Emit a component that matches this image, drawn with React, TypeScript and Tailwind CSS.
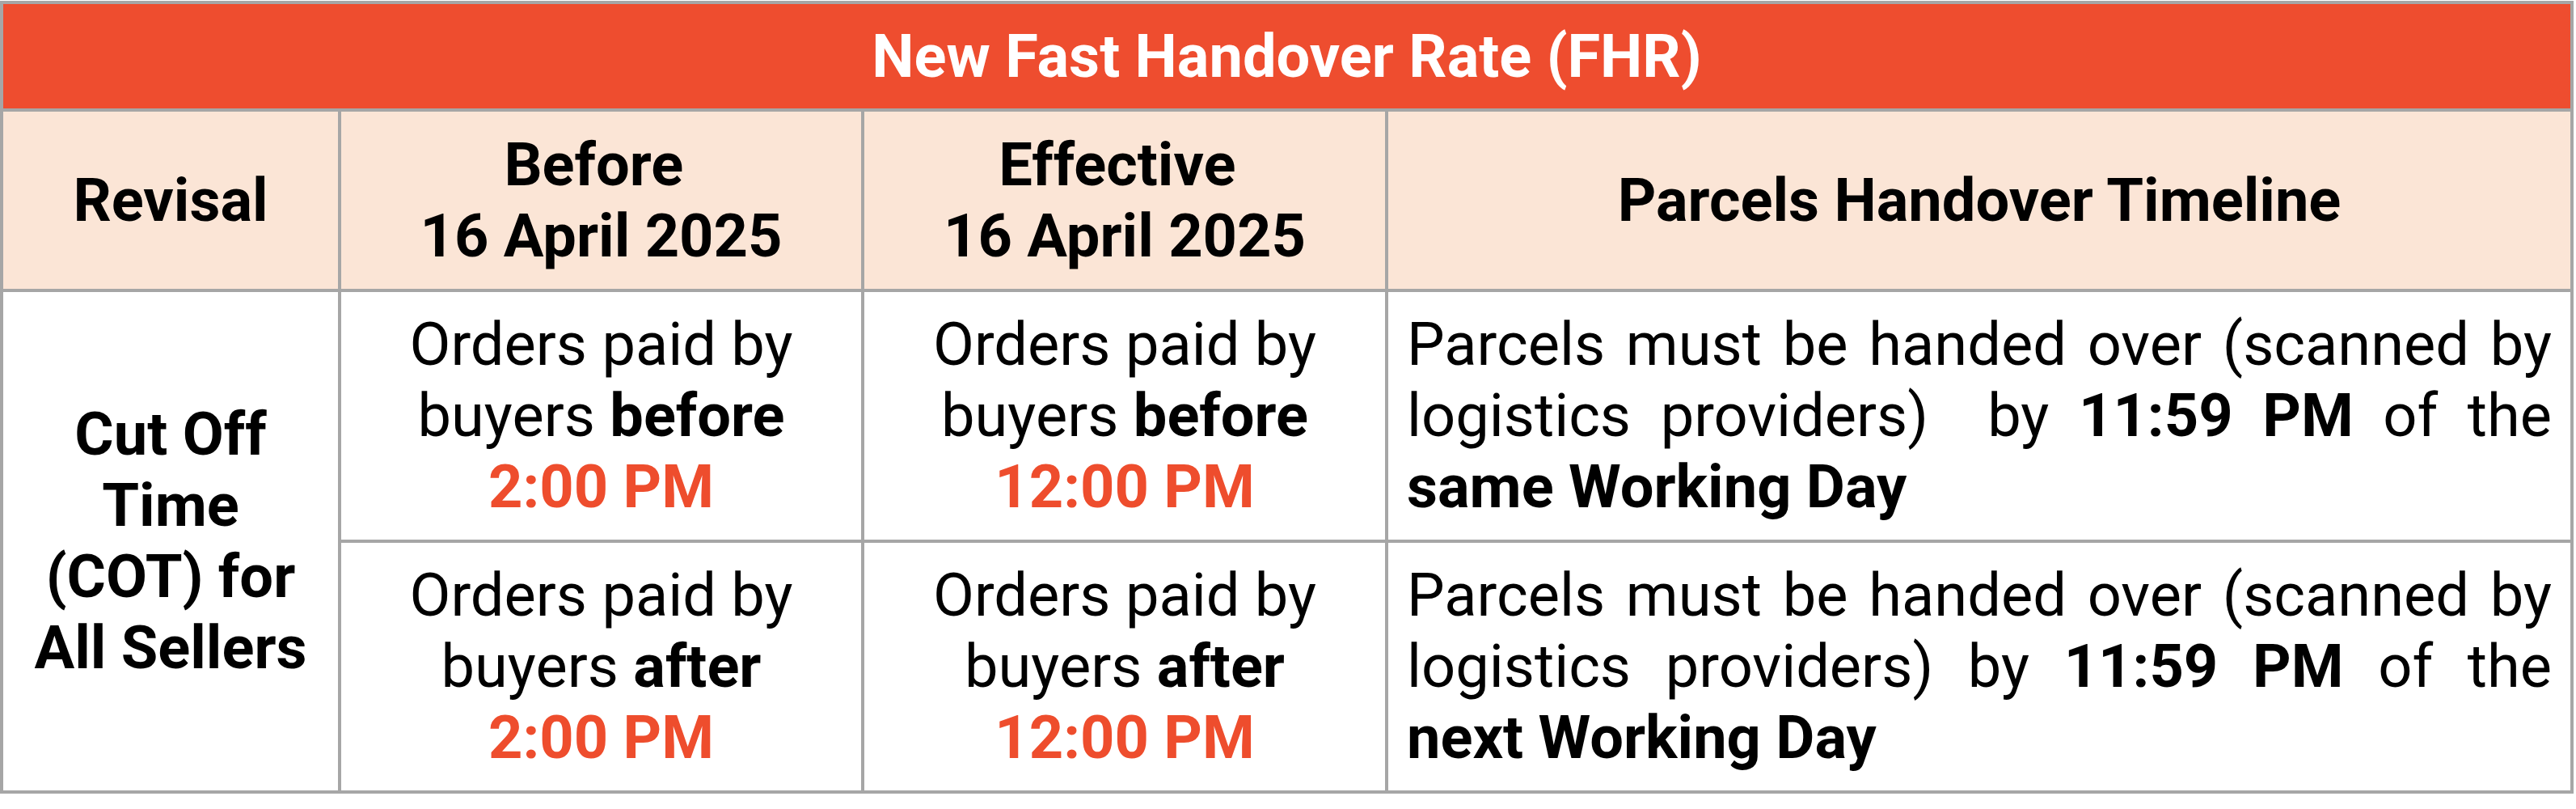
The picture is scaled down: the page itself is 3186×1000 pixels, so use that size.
import React from "react";

const Orange = ({ children }: { children: React.ReactNode }) => (
  <span className="font-bold text-[#ee4d2d]">{children}</span>
);

export default function App() {
  const cellBase =
    "flex items-center justify-center text-center bg-white text-black";
  return (
    <div className="w-[3186px] h-[1000px] bg-white font-['Roboto',sans-serif] text-[74px] leading-[88px]">
      <div className="mt-[1px] w-[3183px] grid grid-cols-[414px_643px_644px_1462px] grid-rows-[129px_219px_306px_306px] gap-[4px] p-[4px] bg-[#a6a6a6]">
        {/* Title */}
        <div className="col-span-4 flex items-center justify-center bg-[#ee4d2f] text-white font-bold">
          New Fast Handover Rate (FHR)
        </div>

        {/* Header row */}
        <div className="flex items-center justify-center text-center bg-[#fbe5d6] font-bold text-black">
          Revisal
        </div>
        <div className="flex items-center justify-center text-center bg-[#fbe5d6] font-bold text-black">
          <div>
            Before&nbsp;
            <br />
            16 April 2025
          </div>
        </div>
        <div className="flex items-center justify-center text-center bg-[#fbe5d6] font-bold text-black">
          <div>
            Effective&nbsp;
            <br />
            16 April 2025
          </div>
        </div>
        <div className="flex items-center justify-center text-center bg-[#fbe5d6] font-bold text-black">
          Parcels Handover Timeline
        </div>

        {/* Merged first column */}
        <div className={`${cellBase} row-span-2 font-bold`}>
          <div>
            Cut Off
            <br />
            Time
            <br />
            (COT) for
            <br />
            All Sellers
          </div>
        </div>

        {/* Row 1 */}
        <div className={cellBase}>
          <div>
            Orders paid by
            <br />
            buyers <span className="font-bold">before</span>
            <br />
            <Orange>2:00 PM</Orange>
          </div>
        </div>
        <div className={cellBase}>
          <div>
            Orders paid by
            <br />
            buyers <span className="font-bold">before</span>
            <br />
            <Orange>12:00 PM</Orange>
          </div>
        </div>
        <div className="flex items-center bg-white text-black px-[23px]">
          <div className="w-full text-left">
            <div className="text-justify [text-align-last:justify]">
              Parcels must be handed over (scanned by
            </div>
            <div className="text-justify [text-align-last:justify]">
              logistics providers)&nbsp; by <span className="font-bold">11:59 PM</span> of the
            </div>
            <div className="font-bold">same Working Day</div>
          </div>
        </div>

        {/* Row 2 */}
        <div className={cellBase}>
          <div>
            Orders paid by
            <br />
            buyers <span className="font-bold">after</span>
            <br />
            <Orange>2:00 PM</Orange>
          </div>
        </div>
        <div className={cellBase}>
          <div>
            Orders paid by
            <br />
            buyers <span className="font-bold">after</span>
            <br />
            <Orange>12:00 PM</Orange>
          </div>
        </div>
        <div className="flex items-center bg-white text-black px-[23px]">
          <div className="w-full text-left">
            <div className="text-justify [text-align-last:justify]">
              Parcels must be handed over (scanned by
            </div>
            <div className="text-justify [text-align-last:justify]">
              logistics providers) by <span className="font-bold">11:59 PM</span> of the
            </div>
            <div className="font-bold">next Working Day</div>
          </div>
        </div>
      </div>
    </div>
  );
}
